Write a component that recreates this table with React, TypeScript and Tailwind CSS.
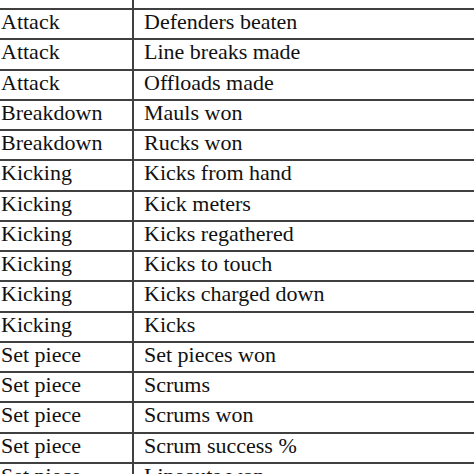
import React from "react";

const rows: [string, string][] = [
  ["Attack", "Defenders beaten"],
  ["Attack", "Line breaks made"],
  ["Attack", "Offloads made"],
  ["Breakdown", "Mauls won"],
  ["Breakdown", "Rucks won"],
  ["Kicking", "Kicks from hand"],
  ["Kicking", "Kick meters"],
  ["Kicking", "Kicks regathered"],
  ["Kicking", "Kicks to touch"],
  ["Kicking", "Kicks charged down"],
  ["Kicking", "Kicks"],
  ["Set piece", "Set pieces won"],
  ["Set piece", "Scrums"],
  ["Set piece", "Scrums won"],
  ["Set piece", "Scrum success %"],
  ["Set piece", "Lineouts won"],
];

export default function App() {
  return (
    <div className="w-[474px] h-[474px] overflow-hidden bg-white text-[#111] text-[22px] leading-[23px] font-['Liberation_Serif','Times_New_Roman',serif]">
      <div className="flex flex-col">
        <div className="grid grid-cols-[132px_1fr] h-[8px] shrink-0">
          <div />
          <div className="border-l-2 border-[#404040]" />
        </div>
        {rows.map(([a, b], i) => (
          <div
            key={i}
            className="grid grid-cols-[132px_1fr] h-[30.27px] shrink-0 border-t-2 border-[#404040] box-border"
          >
            <div className="pl-[1px] whitespace-nowrap font-['Liberation_Serif',serif]">{a}</div>
            <div className="border-l-2 border-[#404040] pl-[10px] whitespace-nowrap font-['Liberation_Serif',serif]">{b}</div>
          </div>
        ))}
      </div>
    </div>
  );
}
